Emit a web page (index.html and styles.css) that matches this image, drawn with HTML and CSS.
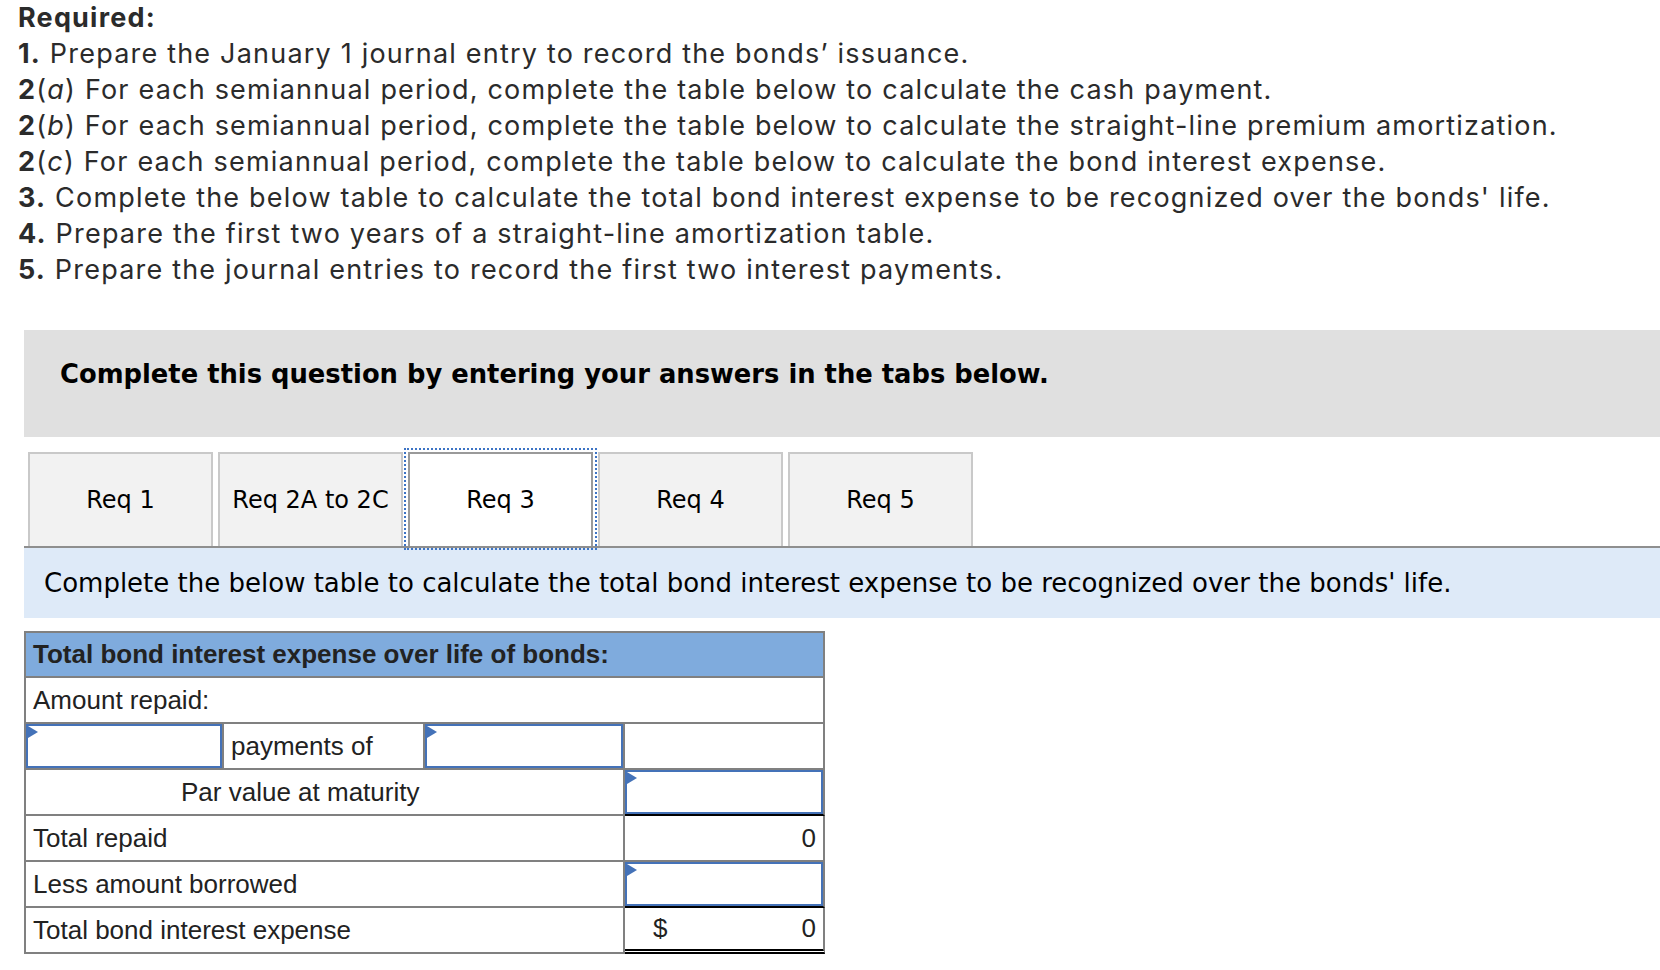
FILE: index.html
```html
<!DOCTYPE html>
<html lang="en">
<head>
<meta charset="utf-8">
<title>Required</title>
<link rel="stylesheet" href="styles.css">
</head>
<body>
<div class="required">
  <p class="req-head">Required:</p>
  <p><b>1.</b> Prepare the January 1 journal entry to record the bonds’ issuance.</p>
  <p><b>2</b>(<i>a</i>) For each semiannual period, complete the table below to calculate the cash payment.</p>
  <p><b>2</b>(<i>b</i>) For each semiannual period, complete the table below to calculate the straight-line premium amortization.</p>
  <p><b>2</b>(<i>c</i>) For each semiannual period, complete the table below to calculate the bond interest expense.</p>
  <p><b>3.</b> Complete the below table to calculate the total bond interest expense to be recognized over the bonds' life.</p>
  <p><b>4.</b> Prepare the first two years of a straight-line amortization table.</p>
  <p><b>5.</b> Prepare the journal entries to record the first two interest payments.</p>
</div>

<section class="question">
  <div class="banner">Complete this question by entering your answers in the tabs below.</div>
  <div class="tabs">
    <div class="tab">Req 1</div>
    <div class="tab">Req 2A to 2C</div>
    <div class="tab active">Req 3</div>
    <div class="tab">Req 4</div>
    <div class="tab">Req 5</div>
  </div>
  <div class="instr">Complete the below table to calculate the total bond interest expense to be recognized over the bonds' life.</div>

  <div class="calc">
    <div class="cell head span4">Total bond interest expense over life of bonds:</div>
    <div class="cell span4">Amount repaid:</div>
    <div class="cell inpcell"><div class="inp"></div></div>
    <div class="cell">payments of</div>
    <div class="cell inpcell"><div class="inp"></div></div>
    <div class="cell"></div>
    <div class="cell span3 par">Par value at maturity</div>
    <div class="cell inpcell under"><div class="inp"></div></div>
    <div class="cell span3">Total repaid</div>
    <div class="cell num">0</div>
    <div class="cell span3">Less amount borrowed</div>
    <div class="cell inpcell under"><div class="inp"></div></div>
    <div class="cell span3">Total bond interest expense</div>
    <div class="cell total"><span>$</span><span>0</span></div>
  </div>
</section>
</body>
</html>
```

FILE: styles.css
```css
body {
  margin: 0;
  background: #fff;
}

.required {
  margin-top: 0;
  padding: 0 18px;
  font-family: "Inter", "Open Sans", sans-serif;
  font-size: 27px;
  letter-spacing: 1.2px;
  line-height: 36px;
  color: #2b2b2b;
}

.required p {
  margin: 0;
  white-space: nowrap;
}

.req-head,
.required b {
  font-weight: 700;
}

.question {
  margin: 42px 0 0 24px;
}

.banner {
  height: 107px;
  box-sizing: border-box;
  padding: 29px 0 0 36px;
  background: #e0e0e0;
  font-family: "DejaVu Sans", Verdana, sans-serif;
  font-weight: 700;
  font-size: 25.8px;
  line-height: 30px;
  color: #000;
  white-space: nowrap;
}

.tabs {
  display: flex;
  gap: 5px;
  padding: 15px 0 0 4px;
  border-bottom: 2px solid #8f8f8f;
}

.tab {
  width: 185px;
  height: 94px;
  box-sizing: border-box;
  border: 2px solid #c9c9c9;
  border-bottom: none;
  background: #f2f2f2;
  display: flex;
  align-items: center;
  justify-content: center;
  font-family: "DejaVu Sans", Verdana, sans-serif;
  font-size: 24px;
  color: #000;
}

.tab.active {
  background: #fff;
  border-color: #9a9a9a;
  outline: 2px dotted #3d74c5;
  outline-offset: 2px;
}

.instr {
  height: 70px;
  box-sizing: border-box;
  padding-left: 20px;
  display: flex;
  align-items: center;
  background: #deeaf8;
  font-family: "DejaVu Sans", Verdana, sans-serif;
  font-size: 26px;
  color: #000;
  white-space: nowrap;
}

.calc {
  margin-top: 13px;
  display: grid;
  grid-template-columns: 198px 201px 200px 200px;
  width: max-content;
  border-top: 2px solid #808080;
  border-left: 2px solid #808080;
  font-family: "Liberation Sans", Arial, sans-serif;
  font-size: 26px;
  color: #222;
}

.cell {
  height: 46px;
  box-sizing: border-box;
  border-right: 2px solid #808080;
  border-bottom: 2px solid #808080;
  padding: 0 7px;
  display: flex;
  align-items: center;
  white-space: nowrap;
}

.head {
  height: 45px;
  background: #7fabdd;
  font-weight: 700;
}

.span4 {
  grid-column: span 4;
}

.span3 {
  grid-column: span 3;
}

.par {
  padding-left: 155px;
}

.inpcell {
  padding: 0;
  align-items: stretch;
}

.inp {
  flex: 1;
  position: relative;
  border: 2px solid #4472b8;
  background: #fff;
}

.inp::before {
  content: "";
  position: absolute;
  left: 0;
  top: 0;
  border-left: 10px solid #4472b8;
  border-top: 6px solid transparent;
  border-bottom: 6px solid transparent;
}

.under {
  border-bottom-color: #000;
}

.num {
  justify-content: flex-end;
}

.total {
  justify-content: space-between;
  padding: 0 7px 0 28px;
  border-bottom: 5px double #000;
}
```
